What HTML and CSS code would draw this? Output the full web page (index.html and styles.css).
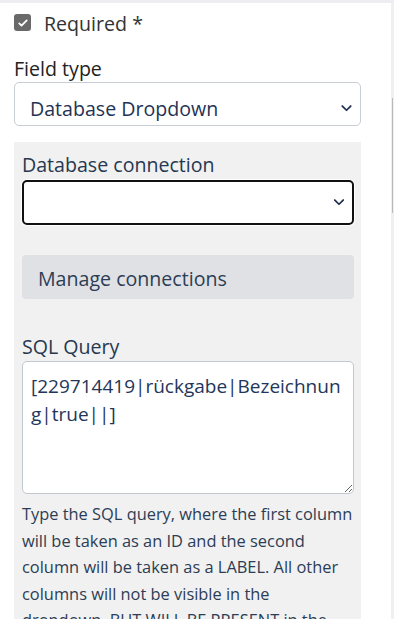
FILE: index.html
```html
<!DOCTYPE html>
<html>
<head>
<meta charset="utf-8">
<link rel="stylesheet" href="styles.css">
</head>
<body>
<div class="topbar"></div>
<div class="frame">
  <div class="content">
    <label class="check">
      <span class="box"><svg viewBox="0 0 16 16" width="12" height="12"><path d="M3 8.5l3 3 7-7" fill="none" stroke="#fff" stroke-width="2.4" stroke-linecap="round" stroke-linejoin="round"/></svg></span>
      <span class="check-text">Required *</span>
    </label>
    <div class="label first">Field type</div>
    <div class="select light">
      <span class="select-text">Database Dropdown</span>
      <svg class="chev" viewBox="0 0 12 8" width="11" height="7"><path d="M1.2 1.2l4.8 4.8 4.8-4.8" fill="none" stroke="#1e2f4f" stroke-width="2" stroke-linecap="round" stroke-linejoin="round"/></svg>
    </div>
    <div class="panel">
      <div class="label">Database connection</div>
      <div class="select dark">
        <span class="select-text"></span>
        <svg class="chev" viewBox="0 0 12 8" width="12" height="7"><path d="M1.2 1.2l4.8 4.8 4.8-4.8" fill="none" stroke="#1e2f4f" stroke-width="2" stroke-linecap="round" stroke-linejoin="round"/></svg>
      </div>
      <button class="btn">Manage connections</button>
      <div class="label sql-label">SQL Query</div>
      <textarea class="sql">[229714419|rückgabe|Bezeichnung|true||]</textarea>
      <p class="help">Type the SQL query, where the first column will be taken as an ID and the second column will be taken as a LABEL. All other columns will not be visible in the dropdown, BUT WILL BE PRESENT in the data of the form.</p>
    </div>
  </div>
  <div class="rail"><div class="thumb"></div></div>
</div>
</body>
</html>
```

FILE: styles.css
```css
html, body {
  margin: 0;
  padding: 0;
  background: #fff;
  height: 619px;
  overflow: hidden;
}
body {
  font-family: "Open Sans", "Noto Sans", sans-serif;
  color: #2c3d55;
}
.topbar {
  height: 3px;
  background: #ededf2;
}
.frame {
  display: flex;
  height: 616px;
  overflow: hidden;
}
.content {
  flex: 1;
  padding: 0 30px 0 14px;
  min-width: 0;
}
.rail {
  width: 3px;
  background: #f0f0f0;
  padding-top: 95px;
}
.thumb {
  width: 1px;
  margin-left: 1px;
  height: 115px;
  background: #b9b9b9;
}
.check {
  display: flex;
  align-items: center;
  gap: 13px;
  margin-top: 5px;
  height: 28px;
}
.box {
  width: 17px;
  height: 17px;
  border-radius: 3px;
  background: #6a6a6a;
  display: flex;
  align-items: center;
  justify-content: center;
  margin-top: 1px;
}
.check-text {
  font-size: 19.6px;
  color: #333;
  line-height: 28px;
  padding-top: 4px;
}
.label {
  font-size: 19.6px;
  line-height: 26px;
  padding-top: 2px;
  color: #263850;
}
.label.first {
  margin-top: 18px;
  color: #222;
}
.select {
  display: flex;
  align-items: flex-start;
  justify-content: space-between;
  background: #fff;
  border-radius: 5px;
  box-sizing: border-box;
}
.select.light {
  height: 44px;
  border: 1px solid #c9cdd6;
  padding: 0 8px 0 15px;
}
.select.light .select-text {
  font-size: 19.6px;
  line-height: 26px;
  color: #1f3354;
  margin-top: 13px;
}
.select.light .chev {
  margin-top: 22px;
}
.select.dark {
  height: 45px;
  border: 2px solid #111;
  padding: 0 7px 0 10px;
  margin-top: 2px;
  align-items: center;
  box-shadow: 0 0 0 1px #fff;
}
.panel {
  background: #f1f1f1;
  margin-top: 16px;
  padding: 8px 7px 40px 8px;
  min-height: 500px;
}
.btn {
  display: block;
  width: 100%;
  height: 44px;
  margin-top: 30px;
  border: 0;
  border-radius: 4px;
  background: #e0e1e5;
  color: #2c3d55;
  font-family: inherit;
  font-size: 19.6px;
  line-height: 26px;
  text-align: left;
  padding: 4px 16px 0;
}
.sql-label {
  margin-top: 33px;
}
.sql {
  display: block;
  box-sizing: border-box;
  width: 100%;
  height: 133px;
  margin: 1px 0 0;
  border: 1px solid #c3c7cf;
  border-radius: 5px;
  padding: 10px 8px 5px;
  font-family: inherit;
  font-size: 19px;
  line-height: 28px;
  color: #23365a;
  background: #fff;
  resize: vertical;
}
.help {
  margin: 7px 0 0;
  font-size: 16.4px;
  line-height: 26.5px;
  color: #2c3d55;
}
```
